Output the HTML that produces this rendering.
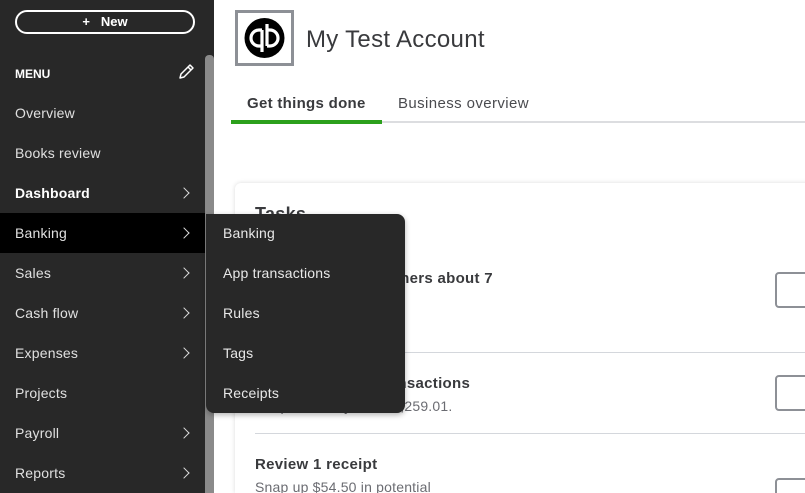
<!DOCTYPE html>
<html style="overflow:hidden;height:493px"><head><style>
*{margin:0;padding:0;box-sizing:border-box}
body{width:805px;height:493px;overflow:hidden;background:#fff;font-family:"Liberation Sans",sans-serif;position:relative}
.side{position:absolute;left:0;top:0;width:205px;height:493px;background:#282828;color:#e6e6e6}
.scroll{position:absolute;left:205px;top:0;width:9px;height:493px;background:#282828}
.thumb{position:absolute;left:205px;top:55px;width:9px;height:438px;background:#8a8a8a;border-radius:4px 4px 0 0}
.new{position:absolute;left:15px;top:10px;width:180px;height:24px;border:2px solid #fff;border-radius:12px;color:#fff;font-size:13px;font-weight:bold;text-align:center;line-height:20px}
.menu{position:absolute;left:15px;top:67px;font-size:12px;font-weight:bold;color:#fff}
.item{position:absolute;left:0;width:205px;height:40px;line-height:40px;padding-left:15px;font-size:14px;color:#e0e0e0;letter-spacing:.2px}
.item.b{font-weight:bold;color:#fff}
.item.act{background:#000}
.chev{position:absolute;left:180px;top:16px;width:8px;height:8px;border-right:1.6px solid #ddd;border-top:1.6px solid #ddd;transform:rotate(45deg)}
.fly{position:absolute;left:206px;top:214px;width:199px;height:199px;background:#282828;border-radius:0 8px 8px 8px;box-shadow:0 2px 6px rgba(0,0,0,.3)}
.fly div{height:40px;line-height:38px;padding-left:17px;font-size:14px;color:#e8e8e8;letter-spacing:.2px}
.logo{position:absolute;left:235px;top:10px;width:59px;height:56px;border:3px solid #8d9096;background:#fff}
.title{position:absolute;left:306px;top:26px;font-size:24px;color:#393a3d;letter-spacing:.3px}
.tab1{position:absolute;left:247px;top:95px;font-size:15px;font-weight:bold;color:#393a3d;letter-spacing:.3px}
.tab2{position:absolute;left:398px;top:95px;font-size:15px;color:#4a4b4f;letter-spacing:.4px}
.tl{position:absolute;left:231px;top:121px;width:574px;height:2px;background:#dcdde0}
.tg{position:absolute;left:231px;top:120px;width:151px;height:4px;background:#2ca01c}
.card{position:absolute;left:235px;top:183px;width:600px;height:310px;background:#fff;border-radius:6px 6px 0 0;box-shadow:0 0 5px rgba(0,0,0,.15)}
.t{position:absolute;font-size:15px;font-weight:bold;color:#393a3d;letter-spacing:.3px}
.s{position:absolute;font-size:14px;color:#6b6c72;letter-spacing:.2px}
.hr{position:absolute;left:255px;width:560px;height:1px;background:#d4d7dc}
.btn{position:absolute;left:775px;width:40px;height:36px;border:2px solid #8d9096;border-radius:4px}
</style></head><body>
<div class="card"></div>
<div class="t" style="left:255px;top:204px;font-size:18px">Tasks</div>
<div class="t" style="left:255px;top:270px">Remind your customers about 7</div>
<div class="btn" style="top:272px"></div>
<div class="hr" style="top:352px"></div>
<div class="t" style="left:255px;top:375px">Categorize your transactions</div>
<div class="s" style="left:255px;top:398px">Keep track of your $12,259.01.</div>
<div class="btn" style="top:375px"></div>
<div class="hr" style="top:433px"></div>
<div class="t" style="left:255px;top:456px">Review 1 receipt</div>
<div class="s" style="left:255px;top:479px">Snap up $54.50 in potential</div>
<div class="btn" style="top:478px"></div>

<div class="logo"><svg width="53" height="50" viewBox="0 0 53 50"><circle cx="26.5" cy="25" r="20" fill="#000"/><g fill="none" stroke="#fff" stroke-width="3.2"><path d="M24 17h-3a8 8 0 0 0 0 16h3M24 17v22"/><path d="M29 33h3a8 8 0 0 0 0-16h-3M29 33V11"/></g></svg></div>
<div class="title">My Test Account</div>
<div class="tab1">Get things done</div>
<div class="tab2">Business overview</div>
<div class="tl"></div><div class="tg"></div>

<div class="side">
<div class="new">+&nbsp;&nbsp; New</div>
<div class="menu">MENU</div>
<svg style="position:absolute;left:177px;top:63px" width="18" height="18" viewBox="0 0 18 18"><path d="M3 15l1-4 9-9 3 3-9 9z M11 4l3 3" fill="none" stroke="#fff" stroke-width="1.5" stroke-linejoin="round"/></svg>
<div class="item" style="top:93px">Overview</div>
<div class="item" style="top:133px">Books review</div>
<div class="item b" style="top:173px">Dashboard<span class="chev"></span></div>
<div class="item act" style="top:213px">Banking<span class="chev"></span></div>
<div class="item" style="top:253px">Sales<span class="chev"></span></div>
<div class="item" style="top:293px">Cash flow<span class="chev"></span></div>
<div class="item" style="top:333px">Expenses<span class="chev"></span></div>
<div class="item" style="top:373px">Projects</div>
<div class="item" style="top:413px">Payroll<span class="chev"></span></div>
<div class="item" style="top:453px">Reports<span class="chev"></span></div>
</div>
<div class="scroll"></div><div class="thumb"></div>
<div class="fly"><div>Banking</div><div>App transactions</div><div>Rules</div><div>Tags</div><div>Receipts</div></div>
</body></html>
